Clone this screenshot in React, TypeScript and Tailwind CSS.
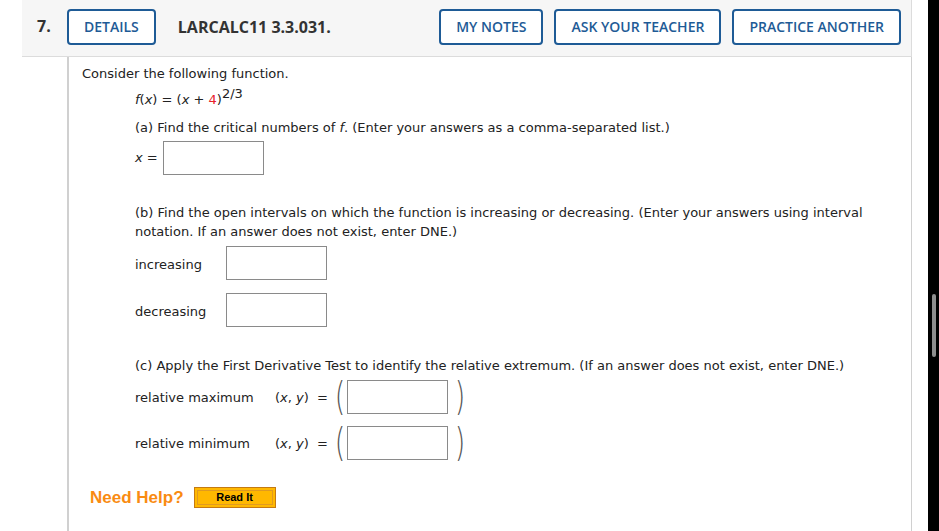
import React from 'react';

const btn =
  "h-[36px] px-[15px] border-2 border-[#1e5b96] rounded-[4px] text-[#1e5b96] text-[14px] font-semibold bg-white flex items-center";

const Box: React.FC<{ w?: string }> = ({ w = "w-[101px]" }) => (
  <div className={`${w} h-[34px] border border-[#8a8a8a] bg-white`} />
);

const Paren: React.FC<{ ch: string }> = ({ ch }) => (
  <span className="text-[36px] font-extralight leading-none text-[#555] scale-x-75 scale-y-110 inline-block" style={{ fontFamily: '"DejaVu Sans", sans-serif' }}>
    {ch}
  </span>
);

export default function App() {
  return (
    <div className="w-[939px] h-[531px] bg-white overflow-hidden flex">
      <div className="w-[928px] pl-[22px] flex flex-col">
        <div className="w-[890px] h-[57px] bg-[#f6f6f6] border-b border-r border-[#dcdcdc] flex items-center pb-[3px] font-['Open_Sans',sans-serif]">
          <div className="w-[45px] text-[16px] font-bold text-[#333] pl-[15px] -mt-[2px]">7.</div>
          <button className={btn}>DETAILS</button>
          <div className="ml-[22px] text-[16px] font-bold text-[#333]">LARCALC11 3.3.031.</div>
          <div className="ml-auto flex gap-[11px] pr-[10px]">
            <button className={btn}>MY NOTES</button>
            <button className={btn}>ASK YOUR TEACHER</button>
            <button className={btn}>PRACTICE ANOTHER</button>
          </div>
        </div>
        <div className="ml-[45px] w-[845px] flex-1 border-l-2 border-r border-[#d0d0d0] pl-[13px] pt-[8px] text-[13px] text-[#222] font-['DejaVu_Sans',Verdana,sans-serif]">
          <p className="leading-[18px]">Consider the following function.</p>
          <div className="pl-[53px]">
            <p className="mt-[8px] leading-[18px]">
              <i>f</i>(<i>x</i>) = (<i>x</i> + <span className="text-[#e8202a]">4</span>)
              <sup className="text-[13px] relative -top-[6px]">2/3</sup>
            </p>
            <p className="mt-[10px] leading-[18px]">
              (a) Find the critical numbers of <i>f</i>. (Enter your answers as a comma-separated list.)
            </p>
            <div className="mt-[4px] flex items-center gap-[5px]">
              <span><i>x</i> =</span>
              <Box />
            </div>
            <p className="mt-[28px] leading-[19px]">
              (b) Find the open intervals on which the function is increasing or decreasing. (Enter your answers using interval notation. If an answer does not exist, enter DNE.)
            </p>
            <div className="mt-[5px] flex items-center">
              <span className="w-[91px] mt-[4px]">increasing</span>
              <Box />
            </div>
            <div className="mt-[13px] flex items-center">
              <span className="w-[91px] mt-[4px]">decreasing</span>
              <Box />
            </div>
            <p className="mt-[30px] leading-[18px]">
              (c) Apply the First Derivative Test to identify the relative extremum. (If an answer does not exist, enter DNE.)
            </p>
            <div className="mt-[4px] flex items-center">
              <span className="w-[140px] mt-[2px]">relative maximum</span>
              <span className="mt-[2px]">(<i>x</i>, <i>y</i>) &nbsp;=</span>
              <span className="ml-[5px] flex items-center">
                <Paren ch="(" />
                <Box />
                <span className="ml-[5px]"><Paren ch=")" /></span>
              </span>
            </div>
            <div className="mt-[10px] flex items-center">
              <span className="w-[140px] mt-[2px]">relative minimum</span>
              <span className="mt-[2px]">(<i>x</i>, <i>y</i>) &nbsp;=</span>
              <span className="ml-[5px] flex items-center">
                <Paren ch="(" />
                <Box />
                <span className="ml-[5px]"><Paren ch=")" /></span>
              </span>
            </div>
          </div>
          <div className="mt-[24px] ml-[8px] flex items-center gap-[10px]">
            <span className="text-[17px] font-bold text-[#f98b12] font-['Liberation_Sans',Arial,sans-serif]">Need Help?</span>
            <button className="w-[82px] h-[21px] border border-[#c47a12] bg-[#ffb800] p-[2px]">
              <span className="block w-full h-full border border-[#e09a20] text-[11px] font-bold text-black leading-[13px] font-['Liberation_Sans',Arial,sans-serif]">
                Read It
              </span>
            </button>
          </div>
        </div>
      </div>
      <div className="w-[11px] h-full bg-black relative">
        <div className="absolute left-[4px] top-[294px] w-[4px] h-[63px] rounded bg-[#8e8e8e]" />
      </div>
    </div>
  );
}
